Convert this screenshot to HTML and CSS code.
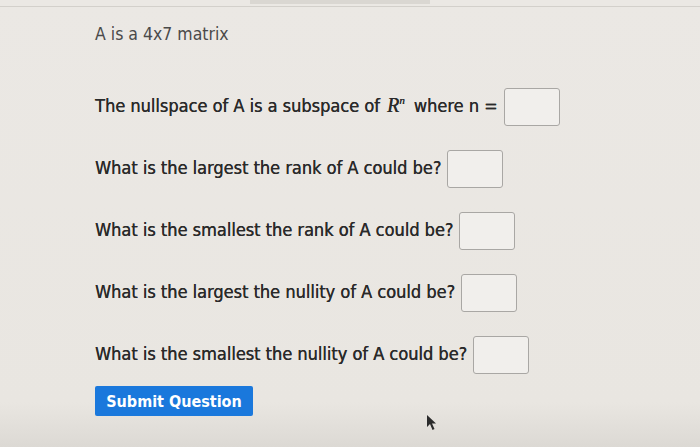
FILE: index.html
```html
<!DOCTYPE html>
<html>
<head>
<meta charset="utf-8">
<link rel="stylesheet" href="styles.css">
</head>
<body>
<div class="page">
  <div class="topbar"><div class="tab"></div></div>
  <div class="content">
    <p class="intro">A is a 4x7 matrix</p>
    <div class="questions">
      <div class="row"><span class="q">The nullspace of A is a subspace of <span class="math">R<sup>n</sup></span> where n =</span><span class="box"></span></div>
      <div class="row"><span class="q">What is the largest the rank of A could be?</span><span class="box"></span></div>
      <div class="row"><span class="q">What is the smallest the rank of A could be?</span><span class="box"></span></div>
      <div class="row"><span class="q">What is the largest the nullity of A could be?</span><span class="box"></span></div>
      <div class="row"><span class="q">What is the smallest the nullity of A could be?</span><span class="box"></span></div>
    </div>
    <button class="submit">Submit Question</button>
  </div>
  <svg class="cursor" width="12" height="18" viewBox="0 0 12 18"><path d="M1 1 L1 13 L4 10 L6.5 16 L8.5 15 L6 9.5 L10 9.5 Z" fill="#2b2b2b"/></svg>
</div>
</body>
</html>
```
FILE: styles.css
```css
html, body {
  margin: 0;
  padding: 0;
}
body {
  background: #eae7e2;
  font-family: "DejaVu Sans Condensed", "DejaVu Sans", sans-serif;
  color: #333;
}
.page {
  position: relative;
  width: 700px;
  height: 447px;
  overflow: hidden;
  background: linear-gradient(180deg, #ebe8e4 0%, #e9e6e1 90%, #dcd9d4 100%);
}
.topbar {
  height: 6px;
  border-bottom: 1px solid #d3d0cb;
  display: flex;
  padding-left: 250px;
}
.tab {
  width: 180px;
  height: 4px;
  background: #dad7d2;
}
.content {
  padding-left: 95px;
  display: flex;
  flex-direction: column;
  align-items: flex-start;
}
.intro {
  margin: 17px 0 0;
  font-size: 17.5px;
  line-height: 20px;
  color: #4a4a4a;
}
.questions {
  margin-top: 44px;
  display: flex;
  flex-direction: column;
  gap: 24px;
}
.row {
  display: flex;
  align-items: center;
  height: 38px;
  gap: 6px;
}
.q {
  font-size: 18px;
  color: #2a2a2a;
  text-shadow: 0.3px 0 0 #2a2a2a;
  margin-top: -4px;
}
.math {
  font-family: "Liberation Serif", serif;
  font-style: italic;
  font-size: 20px;
  margin: 0 4px 0 2px;
}
.math sup {
  font-size: 11px;
}
.box {
  width: 54px;
  height: 36px;
  border: 1px solid #a9a7a4;
  border-radius: 3px;
  background: #f1efec;
}
.submit {
  margin-top: 12px;
  width: 158px;
  height: 30px;
  border: none;
  border-radius: 2px;
  background: #1a78dc;
  color: #fff;
  font-family: "DejaVu Sans Condensed", "DejaVu Sans", sans-serif;
  font-weight: bold;
  font-size: 16px;
  padding: 0;
}
.cursor {
  position: absolute;
  left: 426px;
  top: 414px;
}
```
